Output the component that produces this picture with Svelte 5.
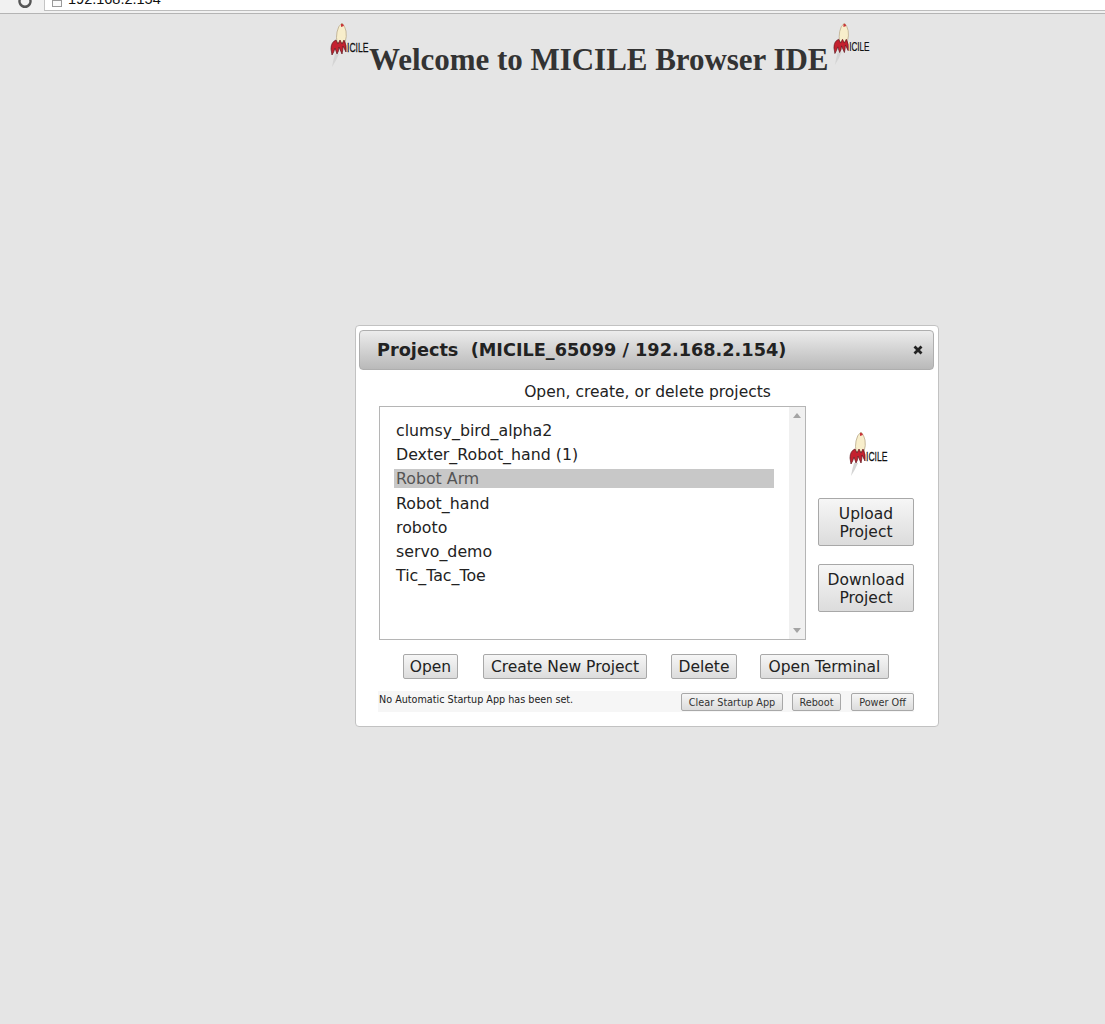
<script>
  const projects = ['clumsy_bird_alpha2', 'Dexter_Robot_hand (1)', 'Robot Arm', 'Robot_hand', 'roboto', 'servo_demo', 'Tic_Tac_Toe'];
  const selected = 'Robot Arm';
</script>

{#snippet logo()}
  <svg class="logo" width="40" height="44" viewBox="0 0 40 44" aria-hidden="true">
    <path d="M5 31 Q3 38 2 44 Q6 38 9 31Z" fill="#d4d4d4" />
    <path d="M12 0 Q8 3 7 9 Q6 14 7 20 L15 20 Q17 13 16 8 Q15 3 12 0Z" fill="#f8eecb" stroke="#b9a98c" stroke-width=".8" />
    <path d="M11 1 Q13 0 14 3 L11 4Z" fill="#c8363a" />
    <path d="M6 17 Q1 19 1 26 L2 32 Q4 29 5 25 L7 31 Q9 28 9 24 L12 31 Q13 27 13 23 L16 29 Q17 22 14 17 L12 21 L10 17 L8 21Z" fill="#c4212f" stroke="#5d171c" stroke-width=".7" />
    <text class="logotext" transform="translate(17 29) scale(0.66 1)">ICILE</text>
  </svg>
{/snippet}

<div class="page">
  <div class="chrome">
    <svg class="reload" width="16" height="10" viewBox="0 0 16 10" aria-hidden="true">
      <path d="M13 -1 A5.5 5.5 0 1 1 3 -1" fill="none" stroke="#555" stroke-width="2.4" />
    </svg>
    <div class="address">
      <span class="favicon"></span>
      <span class="url">192.168.2.154</span>
    </div>
  </div>

  <header class="header">
    {@render logo()}
    <h1>Welcome to MICILE Browser IDE</h1>
    {@render logo()}
  </header>

  <section class="dialog">
    <div class="titlebar">
      <span class="title">Projects&nbsp; (MICILE_65099 / 192.168.2.154)</span>
      <svg class="close" width="10" height="10" viewBox="0 0 10 10" aria-hidden="true">
        <path d="M1.5 1.5 L8.5 8.5 M8.5 1.5 L1.5 8.5" stroke="#222" stroke-width="2.8" />
      </svg>
    </div>

    <div class="content">
      <p class="prompt">Open, create, or delete projects</p>
      <div class="main">
        <div class="listbox">
          <ul>
            {#each projects as p}
              <li class:selected={p === selected}>{p}</li>
            {/each}
          </ul>
          <div class="scrollbar">
            <span class="arrow up"></span>
            <span class="arrow down"></span>
          </div>
        </div>
        <div class="side">
          <div class="sidelogo">{@render logo()}</div>
          <button class="big">Upload Project</button>
          <button class="big">Download Project</button>
        </div>
      </div>

      <div class="actions">
        <button class="open">Open</button>
        <button class="create">Create New Project</button>
        <button class="del">Delete</button>
        <button class="term">Open Terminal</button>
      </div>

      <div class="status">
        <span class="msg">No Automatic Startup App has been set.</span>
        <div class="sysbtns">
          <button class="small clear">Clear Startup App</button>
          <button class="small reboot">Reboot</button>
          <button class="small power">Power Off</button>
        </div>
      </div>
    </div>
  </section>
</div>

<style>
  :global(body) {
    margin: 0;
    background: #e5e5e5;
  }
  .page {
    height: 1024px;
    overflow: hidden;
    font-family: "DejaVu Sans", Verdana, sans-serif;
    color: #222;
  }
  .chrome {
    box-sizing: border-box;
    height: 14px;
    background: #f1f1f1;
    border-bottom: 1px solid #b4b4b4;
    display: flex;
    align-items: flex-start;
    padding-left: 17px;
    gap: 11px;
  }
  .reload {
    display: block;
  }
  .address {
    flex: 1;
    height: 10px;
    background: #fff;
    border-bottom: 1px solid #bdbdbd;
    border-left: 1px solid #c4c4c4;
    display: flex;
    padding-left: 7px;
    gap: 6px;
    overflow: hidden;
  }
  .favicon {
    width: 8px;
    height: 5px;
    border: 1px solid #999;
    background: #fafafa;
  }
  .url {
    font: 14.5px/15px "Liberation Sans", sans-serif;
    margin-top: -8px;
    color: #111;
  }
  .header {
    display: flex;
    align-items: flex-start;
    padding-left: 330px;
    height: 311px;
    box-sizing: border-box;
    padding-top: 9px;
  }
  .header .logo:last-child {
    margin-left: 4px;
    margin-top: -1px;
    width: 38px;
  }
  .logo {
    display: block;
    flex: none;
  }
  .logotext {
    font: 13px "Liberation Sans", sans-serif;
    fill: #111;
    stroke: #111;
    stroke-width: 0.25px;
  }
  h1 {
    margin: 19px 0 0 -1px;
    font: bold 31px/36px "Liberation Serif", serif;
    letter-spacing: -0.03px;
    color: #333;
    white-space: nowrap;
  }
  .dialog {
    box-sizing: border-box;
    width: 584px;
    height: 402px;
    margin-left: 355px;
    background: #fff;
    border: 1px solid #c2c2c2;
    border-radius: 4px;
    padding: 4px 3px 0;
  }
  .titlebar {
    box-sizing: border-box;
    height: 40px;
    width: 575px;
    border: 1px solid #aeaeae;
    border-radius: 4px;
    background: linear-gradient(#ececec, #b9b9b9);
    display: flex;
    align-items: center;
    justify-content: space-between;
    padding: 0 10px 0 17px;
  }
  .title {
    font-weight: bold;
    font-size: 17.7px;
    color: #222;
    white-space: nowrap;
  }
  .close {
    display: block;
  }
  .content {
    padding: 0 19px 0 20px;
  }
  .prompt {
    margin: 0;
    height: 36px;
    padding-top: 13px;
    box-sizing: border-box;
    line-height: 18px;
    font-size: 15.5px;
    text-align: center;
  }
  .main {
    display: flex;
    align-items: flex-start;
  }
  .listbox {
    box-sizing: border-box;
    width: 427px;
    height: 234px;
    border: 1px solid #b5b5b5;
    display: flex;
    justify-content: space-between;
  }
  ul {
    list-style: none;
    margin: 0;
    padding: 14px 0 0 14px;
    width: 380px;
    font-size: 15.8px;
  }
  li {
    height: 19px;
    line-height: 19px;
    margin-bottom: 5.2px;
    padding-left: 2px;
    white-space: nowrap;
  }
  li.selected {
    background: #c8c8c8;
    color: #555;
  }
  .scrollbar {
    width: 16px;
    background: #f0f0f0;
    display: flex;
    flex-direction: column;
    justify-content: space-between;
    align-items: center;
    padding: 6px 0;
    box-sizing: border-box;
  }
  .arrow {
    width: 0;
    height: 0;
    border-left: 4px solid transparent;
    border-right: 4px solid transparent;
  }
  .arrow.up {
    border-bottom: 5px solid #a4a4a4;
  }
  .arrow.down {
    border-top: 5px solid #a4a4a4;
  }
  .side {
    margin-left: 12px;
    width: 96px;
    display: flex;
    flex-direction: column;
    align-items: center;
  }
  .sidelogo {
    height: 92px;
    padding: 26px 0 0 5px;
    box-sizing: border-box;
    align-self: stretch;
    display: flex;
    justify-content: center;
  }
  button {
    font-family: "DejaVu Sans", Verdana, sans-serif;
    color: #222;
    border: 1px solid #a8a8a8;
    border-radius: 2px;
    background: linear-gradient(#f6f6f6, #dcdcdc);
    padding: 0;
    box-sizing: border-box;
    white-space: nowrap;
  }
  .big {
    width: 96px;
    height: 48px;
    font-size: 15.5px;
    line-height: 18px;
    white-space: normal;
    margin-bottom: 18px;
    padding-top: 2px;
  }
  .actions {
    display: flex;
    align-items: center;
    height: 25px;
    margin-top: 14px;
    padding-left: 24px;
  }
  .actions button {
    height: 25px;
    font-size: 15.5px;
  }
  .open { width: 55px; margin-right: 25px; }
  .create { width: 164px; margin-right: 24px; }
  .del { width: 66px; margin-right: 23px; }
  .term { width: 129px; }
  .status {
    margin-top: 12px;
    margin-left: -1px;
    width: 536px;
    height: 21px;
    background: #f6f6f6;
    display: flex;
    justify-content: space-between;
  }
  .msg {
    font-size: 9.65px;
    line-height: 17px;
    padding-left: 1px;
    color: #222;
  }
  .sysbtns {
    display: flex;
    padding-top: 2px;
  }
  .small {
    height: 18px;
    font-size: 9.7px;
    color: #333;
  }
  .clear { width: 102px; margin-right: 9px; }
  .reboot { width: 49px; margin-right: 10px; }
  .power { width: 63px; }
</style>
